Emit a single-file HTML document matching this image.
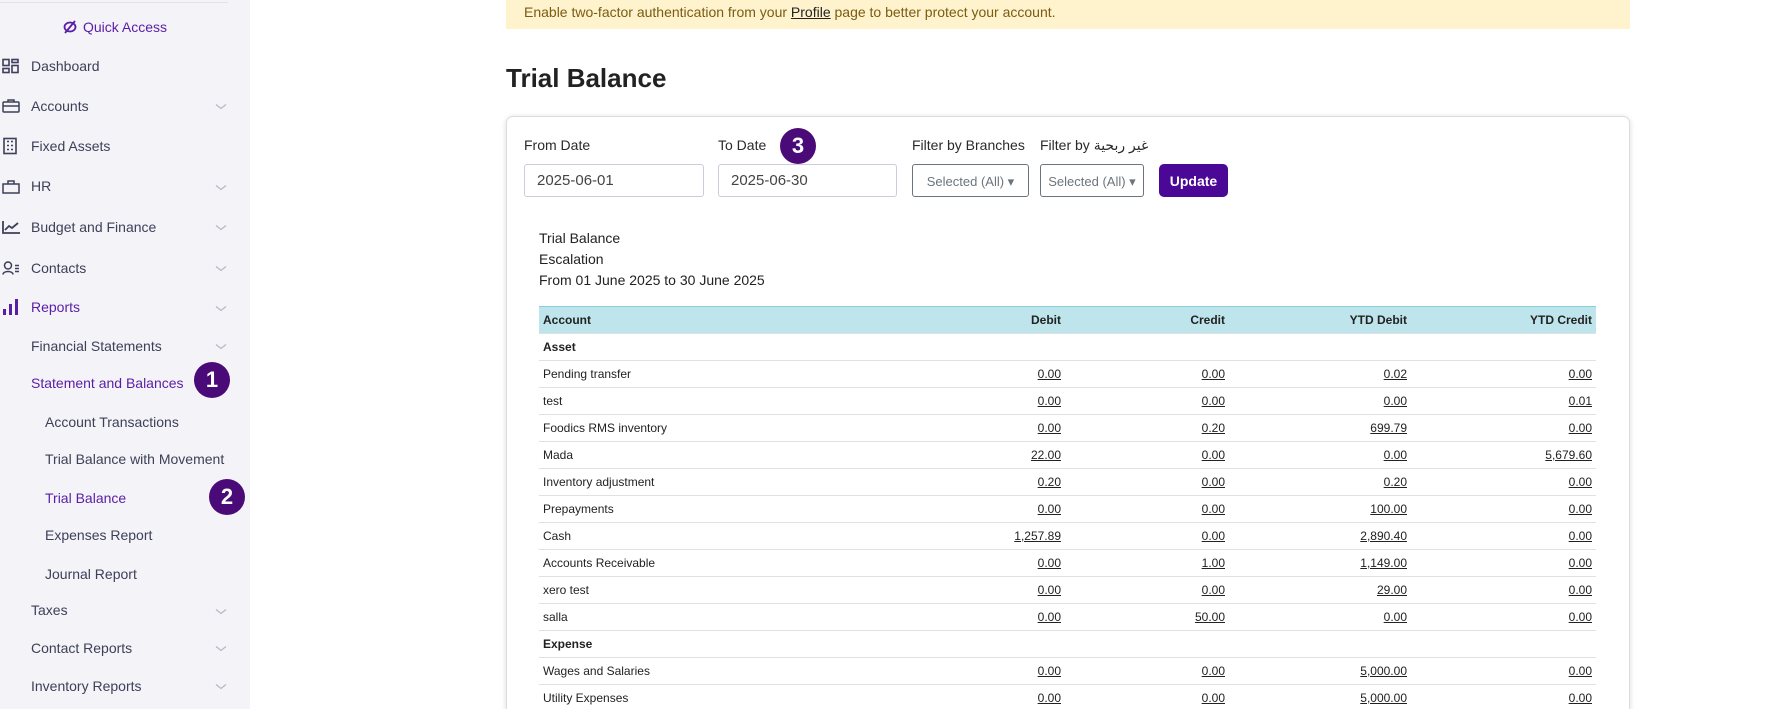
<!DOCTYPE html>
<html><head><meta charset="utf-8"><style>
*{box-sizing:border-box;margin:0;padding:0}
html,body{width:1778px;height:709px;overflow:hidden}
body{background:#fff;font-family:"Liberation Sans","Noto Sans CJK SC",sans-serif;position:relative;color:#212529}
.sb{position:absolute;left:0;top:0;width:250px;height:709px;background:#f3f3f8}
.sb .line{position:absolute;left:0;top:2px;width:228px;height:1px;background:#e2e2ea}
.it{position:absolute;font-size:14px;color:#3d4058;transform:translateY(-50%);white-space:nowrap}
.pu{color:#5a1ea6}
.chev{position:absolute;left:215px;width:12px;height:7px;transform:translateY(-50%)}
.ic{position:absolute;left:2px;transform:translateY(-50%)}
.badge{position:absolute;width:36px;height:36px;border-radius:50%;background:#4a0a77;color:#fff;font-weight:bold;font-size:22px;text-align:center;line-height:36px;transform:translate(-50%,-50%)}
.banner{position:absolute;left:506px;top:0;width:1124px;height:29px;background:#fff3cd;color:#7a5c12;font-size:14px;padding:4px 0 0 18px}
.banner u{color:#222}
h1{position:absolute;left:506px;top:63px;font-size:26px;font-weight:bold;color:#222}
.card{position:absolute;left:506px;top:116px;width:1124px;height:600px;border:1px solid #ddd;border-radius:7px;box-shadow:0 1px 6px rgba(0,0,0,.15)}
.lbl{position:absolute;top:137px;font-size:14px;color:#2a2a2a}
.inp{position:absolute;top:164px;height:33px;border:1px solid #ccd;border-radius:3px;font-size:15px;color:#444;padding:7px 0 0 12px}
.sel{position:absolute;top:164px;height:33px;border:1px solid #6c757d;border-radius:3px;font-size:13px;color:#6c757d;text-align:center;padding-top:9px}
.btn{position:absolute;left:1159px;top:164px;width:69px;height:33px;background:#4b0896;color:#fff;border-radius:5px;font-weight:bold;font-size:14px;text-align:center;padding-top:9px}
.rt{position:absolute;left:539px;font-size:14px;color:#222}
table{position:absolute;left:539px;top:306px;width:1057px;border-collapse:collapse;font-size:12px;table-layout:fixed}
td,th{height:27px;border-bottom:1px solid #dee2e6;padding:0 4px;text-align:right;color:#222;white-space:nowrap}
td:first-child,th:first-child{text-align:left}
th{background:#bee5eb;border-top:1px solid #86cfda;font-weight:bold}
</style></head><body>
<div class="sb"><div class="line"></div>
<div class="it pu" style="left:63px;top:27px"><svg width="14" height="14" viewBox="0 0 14 14" style="vertical-align:-2px;margin-right:6px"><ellipse cx="7" cy="7" rx="5.5" ry="4.5" fill="none" stroke="#5a1ea6" stroke-width="1.8"/><line x1="2" y1="13" x2="12" y2="1" stroke="#5a1ea6" stroke-width="1.8"/></svg>Quick Access</div>
<svg class="ic" style="top:66px" width="17" height="15" viewBox="0 0 17 15" fill="none" stroke="#3d4058" stroke-width="1.6"><rect x="1" y="1" width="6" height="6"/><rect x="10" y="1" width="6" height="3"/><rect x="1" y="10" width="6" height="4"/><rect x="10" y="7" width="6" height="7"/></svg>
<div class="it" style="left:31px;top:66px">Dashboard</div>
<svg class="ic" style="top:106px" width="18" height="14" viewBox="0 0 18 14" fill="none" stroke="#3d4058" stroke-width="1.5"><rect x="1" y="3" width="16" height="10" rx="1"/><path d="M6 3V1h6v2M1 7h16"/></svg>
<div class="it" style="left:31px;top:106px">Accounts</div>
<svg class="ic" style="top:146px" width="16" height="17" viewBox="0 0 16 17" fill="none" stroke="#3d4058" stroke-width="1.6"><rect x="2" y="1" width="12" height="15"/><path d="M5 4h2M9 4h2M5 8h2M9 8h2M5 12h2M9 12h2"/></svg>
<div class="it" style="left:31px;top:146px">Fixed Assets</div>
<svg class="ic" style="top:187px" width="18" height="14" viewBox="0 0 18 14" fill="none" stroke="#3d4058" stroke-width="1.5"><rect x="1" y="4" width="16" height="9"/><path d="M6 4V1h6v3"/></svg>
<div class="it" style="left:31px;top:186px">HR</div>
<svg class="ic" style="top:227px" width="19" height="14" viewBox="0 0 19 14" fill="none" stroke="#3d4058" stroke-width="1.8"><path d="M1 1v12h17M3 10l4-4 3 2 6-5"/></svg>
<div class="it" style="left:31px;top:227px">Budget and Finance</div>
<svg class="ic" style="top:268px" width="18" height="15" viewBox="0 0 18 15" fill="none" stroke="#3d4058" stroke-width="1.5"><circle cx="6" cy="5" r="3.5"/><path d="M1 14c0-4 10-4 10 0M13 5h4M13 8h4M13 11h4"/></svg>
<div class="it" style="left:31px;top:268px">Contacts</div>
<svg class="ic" style="top:307px" width="18" height="16" viewBox="0 0 18 16" fill="#5a1ea6"><rect x="1" y="10" width="3" height="6"/><rect x="7" y="5" width="3" height="11"/><rect x="13" y="0" width="3" height="16"/></svg>
<div class="it pu" style="left:31px;top:307px">Reports</div>
<div class="it" style="left:31px;top:346px">Financial Statements</div>
<div class="it pu" style="left:31px;top:383px">Statement and Balances</div>
<div class="it" style="left:45px;top:422px">Account Transactions</div>
<div class="it" style="left:45px;top:459px">Trial Balance with Movement</div>
<div class="it pu" style="left:45px;top:498px">Trial Balance</div>
<div class="it" style="left:45px;top:535px">Expenses Report</div>
<div class="it" style="left:45px;top:574px">Journal Report</div>
<div class="it" style="left:31px;top:610px">Taxes</div>
<div class="it" style="left:31px;top:648px">Contact Reports</div>
<div class="it" style="left:31px;top:686px">Inventory Reports</div>
<svg class="chev" style="top:107px" viewBox="0 0 12 7"><path d="M1 1l5 4 5-4" fill="none" stroke="#b5b7c4" stroke-width="1.2"/></svg>
<svg class="chev" style="top:188px" viewBox="0 0 12 7"><path d="M1 1l5 4 5-4" fill="none" stroke="#b5b7c4" stroke-width="1.2"/></svg>
<svg class="chev" style="top:228px" viewBox="0 0 12 7"><path d="M1 1l5 4 5-4" fill="none" stroke="#b5b7c4" stroke-width="1.2"/></svg>
<svg class="chev" style="top:269px" viewBox="0 0 12 7"><path d="M1 1l5 4 5-4" fill="none" stroke="#b5b7c4" stroke-width="1.2"/></svg>
<svg class="chev" style="top:309px" viewBox="0 0 12 7"><path d="M1 1l5 4 5-4" fill="none" stroke="#b5b7c4" stroke-width="1.2"/></svg>
<svg class="chev" style="top:347px" viewBox="0 0 12 7"><path d="M1 1l5 4 5-4" fill="none" stroke="#b5b7c4" stroke-width="1.2"/></svg>
<svg class="chev" style="top:612px" viewBox="0 0 12 7"><path d="M1 1l5 4 5-4" fill="none" stroke="#b5b7c4" stroke-width="1.2"/></svg>
<svg class="chev" style="top:649px" viewBox="0 0 12 7"><path d="M1 1l5 4 5-4" fill="none" stroke="#b5b7c4" stroke-width="1.2"/></svg>
<svg class="chev" style="top:687px" viewBox="0 0 12 7"><path d="M1 1l5 4 5-4" fill="none" stroke="#b5b7c4" stroke-width="1.2"/></svg>
</div>
<div class="badge" style="left:212px;top:380px">1</div>
<div class="badge" style="left:227px;top:497px">2</div>
<div class="banner">Enable two-factor authentication from your <u>Profile</u> page to better protect your account.</div>
<h1>Trial Balance</h1>
<div class="card"></div>
<div class="lbl" style="left:524px">From Date</div>
<div class="lbl" style="left:718px">To Date</div>
<div class="lbl" style="left:912px">Filter by Branches</div>
<div class="lbl" style="left:1040px">Filter by غير ربحية</div>
<div class="badge" style="left:798px;top:146px">3</div>
<div class="inp" style="left:524px;width:180px">2025-06-01</div>
<div class="inp" style="left:718px;width:179px">2025-06-30</div>
<div class="sel" style="left:912px;width:117px">Selected (All) ▾</div>
<div class="sel" style="left:1040px;width:104px">Selected (All) ▾</div>
<div class="btn">Update</div>
<div class="rt" style="top:230px">Trial Balance</div>
<div class="rt" style="top:251px">Escalation</div>
<div class="rt" style="top:272px">From 01 June 2025 to 30 June 2025</div>
<table>
<colgroup><col style="width:400px"><col style="width:126px"><col style="width:164px"><col style="width:182px"><col style="width:185px"></colgroup>
<tr><th>Account</th><th>Debit</th><th>Credit</th><th>YTD Debit</th><th>YTD Credit</th></tr>
<tr><td><b>Asset</b></td><td></td><td></td><td></td><td></td></tr>
<tr><td>Pending transfer</td><td><u>0.00</u></td><td><u>0.00</u></td><td><u>0.02</u></td><td><u>0.00</u></td></tr>
<tr><td>test</td><td><u>0.00</u></td><td><u>0.00</u></td><td><u>0.00</u></td><td><u>0.01</u></td></tr>
<tr><td>Foodics RMS inventory</td><td><u>0.00</u></td><td><u>0.20</u></td><td><u>699.79</u></td><td><u>0.00</u></td></tr>
<tr><td>Mada</td><td><u>22.00</u></td><td><u>0.00</u></td><td><u>0.00</u></td><td><u>5,679.60</u></td></tr>
<tr><td>Inventory adjustment</td><td><u>0.20</u></td><td><u>0.00</u></td><td><u>0.20</u></td><td><u>0.00</u></td></tr>
<tr><td>Prepayments</td><td><u>0.00</u></td><td><u>0.00</u></td><td><u>100.00</u></td><td><u>0.00</u></td></tr>
<tr><td>Cash</td><td><u>1,257.89</u></td><td><u>0.00</u></td><td><u>2,890.40</u></td><td><u>0.00</u></td></tr>
<tr><td>Accounts Receivable</td><td><u>0.00</u></td><td><u>1.00</u></td><td><u>1,149.00</u></td><td><u>0.00</u></td></tr>
<tr><td>xero test</td><td><u>0.00</u></td><td><u>0.00</u></td><td><u>29.00</u></td><td><u>0.00</u></td></tr>
<tr><td>salla</td><td><u>0.00</u></td><td><u>50.00</u></td><td><u>0.00</u></td><td><u>0.00</u></td></tr>
<tr><td><b>Expense</b></td><td></td><td></td><td></td><td></td></tr>
<tr><td>Wages and Salaries</td><td><u>0.00</u></td><td><u>0.00</u></td><td><u>5,000.00</u></td><td><u>0.00</u></td></tr>
<tr><td>Utility Expenses</td><td><u>0.00</u></td><td><u>0.00</u></td><td><u>5,000.00</u></td><td><u>0.00</u></td></tr>
</table>
</body></html>
